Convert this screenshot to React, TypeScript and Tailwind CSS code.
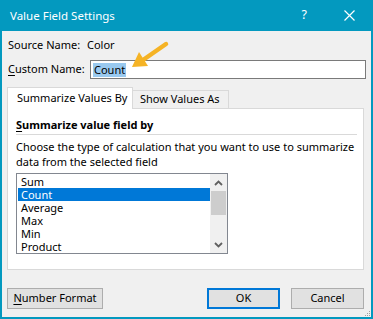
import React from 'react';

const font = { fontFamily: '"Noto Sans", "Liberation Sans", sans-serif' };

const items = ['Sum', 'Count', 'Average', 'Max', 'Min', 'Product'];

function Chevron({ up }: { up?: boolean }) {
  return (
    <svg width="9" height="6" viewBox="0 0 9 6" className="block">
      <path
        d={up ? 'M1 5 L4.5 1.5 L8 5' : 'M1 1 L4.5 4.5 L8 1'}
        fill="none"
        stroke="#606060"
        strokeWidth="1.8"
      />
    </svg>
  );
}

export default function App() {
  return (
    <div
      className="relative flex h-[319px] w-[373px] flex-col whitespace-nowrap bg-[#0399bf] text-[11px] text-black"
      style={font}
    >
      {/* title bar */}
      <div className="flex h-[31px] shrink-0 items-center text-white">
        <span className="pl-[10px] text-[11.5px]">Value Field Settings</span>
        <span className="ml-auto mr-[37px] text-[12.5px]">?</span>
        <svg width="11" height="11" viewBox="0 0 11 11" className="mr-[18px]">
          <path d="M0.5 0.5 L10.5 10.5 M10.5 0.5 L0.5 10.5" stroke="white" strokeWidth="1.2" />
        </svg>
      </div>

      {/* body */}
      <div className="mx-[2px] mb-[2px] flex flex-1 flex-col bg-[#f0f0f0] pl-[5px]">
        <div className="mt-[6px] flex h-[16px] items-center">
          <span className="w-[80px] pl-[1px]">Source Name:</span>
          <span>Color</span>
        </div>

        <div className="mt-[7px] flex h-[19px] items-center">
          <span className="w-[83px] pl-[1px]">
            <span className="underline underline-offset-2">C</span>ustom Name:
          </span>
          <div className="flex h-[19px] w-[276px] items-center border border-[#7a7a7a] bg-white pl-[2px]">
            <span className="bg-[#99c9ef] px-[1px] leading-[14px]">Count</span>
          </div>
        </div>

        {/* tabs */}
        <div className="mt-[8px] flex h-[21px] items-end">
          <div className="relative z-10 -mb-px flex h-[22px] w-[126px] items-center border border-b-0 border-[#d9d9d9] bg-white pl-[9px]">
            Summarize Values By
          </div>
          <div className="flex h-[18px] w-[96px] items-center border border-b-0 border-l-0 border-[#d9d9d9] bg-[#f0f0f0] pl-[7px]">
            Show Values As
          </div>
        </div>

        <div className="flex h-[162px] w-[357px] flex-col border border-[#d9d9d9] bg-white pl-[8px] pr-[6px]">
          <div className="mt-[8px] h-[16px] font-bold leading-[16px]">
            <span className="underline underline-offset-2">S</span>ummarize value field by
          </div>
          <div className="mt-[1px] h-px w-[341px] bg-[#d9d9d9]" />
          <div className="mt-[4px] leading-[15px]">
            Choose the type of calculation that you want to use to summarize
            <br />
            data from the selected field
          </div>
          <div className="mt-[4px] flex h-[81px] w-[212px] border border-[#828790] bg-white">
            <div className="flex flex-1 flex-col pl-[1px] pt-[1px]">
              {items.map((it) => (
                <div
                  key={it}
                  className={`h-[13px] pl-[3px] leading-[13px] ${
                    it === 'Count' ? 'bg-[#0078d7] text-white' : ''
                  }`}
                >
                  {it}
                </div>
              ))}
            </div>
            <div className="flex w-[17px] flex-col items-center bg-[#f0f0f0]">
              <div className="flex h-[17px] items-center">
                <Chevron up />
              </div>
              <div className="h-[24px] w-[15px] bg-[#cdcdcd]" />
              <div className="mt-auto flex h-[17px] items-center">
                <Chevron />
              </div>
            </div>
          </div>
        </div>

        {/* buttons */}
        <div className="mt-[18px] flex h-[21px] pr-[7px]">
          <button className="w-[96px] border border-[#adadad] bg-[#e1e1e1]">
            <span className="underline underline-offset-2">N</span>umber Format
          </button>
          <button className="ml-auto w-[73px] border-2 border-[#0078d7] bg-[#e1e1e1]">OK</button>
          <button className="ml-[11px] w-[73px] border border-[#adadad] bg-[#e1e1e1]">Cancel</button>
        </div>
      </div>

      {/* resize grip */}
      <svg width="7" height="7" viewBox="0 0 7 7" className="absolute bottom-[2px] right-[2px]">
        <rect x="5" y="1" width="1" height="1" fill="#a0a0a0" />
        <rect x="3" y="3" width="1" height="1" fill="#a0a0a0" />
        <rect x="5" y="3" width="1" height="1" fill="#a0a0a0" />
        <rect x="1" y="5" width="1" height="1" fill="#a0a0a0" />
        <rect x="3" y="5" width="1" height="1" fill="#a0a0a0" />
        <rect x="5" y="5" width="1" height="1" fill="#a0a0a0" />
      </svg>

      {/* annotation arrow */}
      <svg width="373" height="319" className="pointer-events-none absolute left-0 top-0">
        <line x1="166" y1="44" x2="143" y2="60" stroke="#f5b325" strokeWidth="4.5" strokeLinecap="round" />
        <polygon points="132,67 148,66 139,52" fill="#f5b325" />
      </svg>
    </div>
  );
}
